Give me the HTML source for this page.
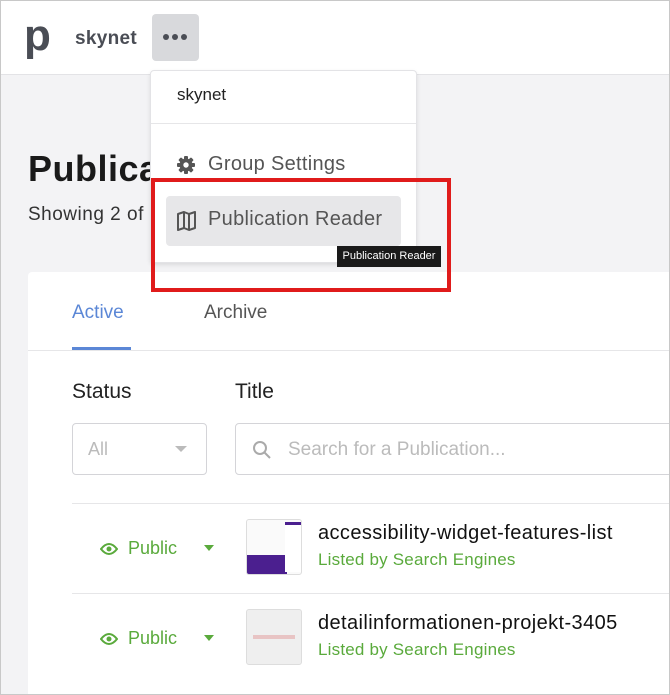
<!DOCTYPE html>
<html><head><style>
*{box-sizing:border-box;margin:0;padding:0}
html,body{width:670px;height:695px;overflow:hidden}
body{background:#f3f3f5;font-family:"Liberation Sans",sans-serif;position:relative}
.a{position:absolute}
.top{left:0;top:0;width:670px;height:75px;background:#fff;border-bottom:1px solid #e3e3e6}
</style></head><body>
<div class="a top"></div>
<div class="a" style="left:24px;top:14px;font-size:44px;font-weight:bold;color:#4a4d55;line-height:44px">p</div>
<div class="a" style="left:75px;top:28px;font-size:19px;font-weight:bold;color:#4a4d55;letter-spacing:0.3px">skynet</div>
<div class="a" style="left:152px;top:14px;width:47px;height:47px;background:#d8d9dc;border-radius:4px"></div>
<div class="a" style="left:163px;top:34px;width:6px;height:6px;border-radius:50%;background:#4a4d55;box-shadow:9px 0 #4a4d55,18px 0 #4a4d55"></div>
<div class="a" style="left:28px;top:148px;font-size:36px;font-weight:900;color:#1a1a1a;letter-spacing:0.5px">Publica</div>
<div class="a" style="left:28px;top:204px;font-size:19px;color:#333;letter-spacing:0.5px">Showing 2 of</div>
<div class="a" style="left:28px;top:272px;width:650px;height:430px;background:#fff;border-radius:4px"></div>
<div class="a" style="left:72px;top:302px;font-size:19px;color:#5b87d6">Active</div>
<div class="a" style="left:204px;top:302px;font-size:19px;color:#555">Archive</div>
<div class="a" style="left:72px;top:347px;width:59px;height:4px;background:#5b87d6"></div>
<div class="a" style="left:28px;top:350px;width:642px;height:1px;background:#e6e6e8"></div>
<div class="a" style="left:72px;top:380px;font-size:21px;color:#222">Status</div>
<div class="a" style="left:235px;top:380px;font-size:21px;color:#222">Title</div>
<div class="a" style="left:72px;top:423px;width:135px;height:52px;border:1px solid #d4d4d8;border-radius:4px"></div>
<div class="a" style="left:88px;top:439px;font-size:18px;color:#bbb">All</div>
<div class="a" style="left:175px;top:446px;border-left:6px solid transparent;border-right:6px solid transparent;border-top:6px solid #bbb"></div>
<div class="a" style="left:235px;top:423px;width:440px;height:52px;border:1px solid #d4d4d8;border-radius:4px"></div>
<svg class="a" style="left:252px;top:440px" width="20" height="20"><circle cx="8" cy="8" r="6" fill="none" stroke="#aaa" stroke-width="2"/><path d="M12.5 12.5L18 18" stroke="#aaa" stroke-width="2"/></svg>
<div class="a" style="left:288px;top:439px;font-size:19px;color:#bbb">Search for a Publication...</div>
<div class="a" style="left:72px;top:503px;width:598px;height:1px;background:#e6e6e8"></div>
<div class="a" style="left:72px;top:593px;width:598px;height:1px;background:#e6e6e8"></div>
<svg class="a" style="left:100px;top:542px" width="18" height="14"><path d="M1 7Q9-3 17 7Q9 17 1 7Z" fill="none" stroke="#5aaa3c" stroke-width="2"/><circle cx="9" cy="7" r="2.5" fill="#5aaa3c"/></svg>
<div class="a" style="left:128px;top:538px;font-size:18px;color:#5aaa3c">Public</div>
<div class="a" style="left:204px;top:545px;border-left:5px solid transparent;border-right:5px solid transparent;border-top:6px solid #5aaa3c"></div>
<svg class="a" style="left:100px;top:632px" width="18" height="14"><path d="M1 7Q9-3 17 7Q9 17 1 7Z" fill="none" stroke="#5aaa3c" stroke-width="2"/><circle cx="9" cy="7" r="2.5" fill="#5aaa3c"/></svg>
<div class="a" style="left:128px;top:628px;font-size:18px;color:#5aaa3c">Public</div>
<div class="a" style="left:204px;top:635px;border-left:5px solid transparent;border-right:5px solid transparent;border-top:6px solid #5aaa3c"></div>
<div class="a" style="left:246px;top:519px;width:56px;height:56px;border:1px solid #ddd;border-radius:3px;background:#fafafa;overflow:hidden"><div style="position:absolute;left:0;top:35px;width:40px;height:20px;background:#4b1f8f"></div><div style="position:absolute;left:38px;top:2px;width:16px;height:50px;background:#fff;border-top:3px solid #4b1f8f"></div></div>
<div class="a" style="left:246px;top:609px;width:56px;height:56px;border:1px solid #ddd;border-radius:3px;background:#efefef"><div style="position:absolute;left:6px;top:25px;width:42px;height:4px;background:#e8c4c4"></div></div>
<div class="a" style="left:318px;top:522px;font-size:20px;color:#111;letter-spacing:0.4px">accessibility-widget-features-list</div>
<div class="a" style="left:318px;top:550px;font-size:17px;color:#5aaa3c;letter-spacing:0.2px">Listed by Search Engines</div>
<div class="a" style="left:318px;top:612px;font-size:20px;color:#111;letter-spacing:0.4px">detailinformationen-projekt-3405</div>
<div class="a" style="left:318px;top:640px;font-size:17px;color:#5aaa3c;letter-spacing:0.2px">Listed by Search Engines</div>
<div class="a" style="left:150px;top:70px;width:267px;height:193px;background:#fff;border:1px solid #e3e3e6;border-radius:4px;box-shadow:0 2px 4px rgba(0,0,0,.1)"></div>
<div class="a" style="left:177px;top:85px;font-size:17px;color:#222">skynet</div>
<div class="a" style="left:151px;top:123px;width:265px;height:1px;background:#e6e6e8"></div>
<svg class="a" style="left:176px;top:155px" width="20" height="20" viewBox="0 0 20 20"><g fill="#555"><circle cx="10" cy="10" r="6.5"/><rect x="8" y="1" width="4" height="18" rx="1"/><rect x="1" y="8" width="18" height="4" rx="1"/><rect x="8" y="1" width="4" height="18" rx="1" transform="rotate(45 10 10)"/><rect x="8" y="1" width="4" height="18" rx="1" transform="rotate(-45 10 10)"/></g><circle cx="10" cy="10" r="2.7" fill="#fff"/></svg>
<div class="a" style="left:208px;top:153px;font-size:20px;color:#555;letter-spacing:0.3px">Group Settings</div>
<div class="a" style="left:166px;top:196px;width:235px;height:50px;background:#e7e7e9;border-radius:4px"></div>
<svg class="a" style="left:176px;top:210px" width="21" height="22" viewBox="0 0 21 22"><path d="M2 4L8 2L13 4L19 2V18L13 20L8 18L2 20Z M8 2V18 M13 4V20" fill="none" stroke="#555" stroke-width="2" stroke-linejoin="round"/></svg>
<div class="a" style="left:208px;top:208px;font-size:20px;color:#555;letter-spacing:0.3px">Publication Reader</div>
<div class="a" style="left:337px;top:246px;width:104px;height:21px;background:#1a1a1a;color:#fff;font-size:11px;line-height:21px;text-align:center">Publication Reader</div>
<div class="a" style="left:151px;top:178px;width:300px;height:114px;border:4px solid #e01b1b"></div>
<div class="a" style="left:0;top:0;width:670px;height:695px;border:1px solid #c8c8c8"></div>
</body></html>
